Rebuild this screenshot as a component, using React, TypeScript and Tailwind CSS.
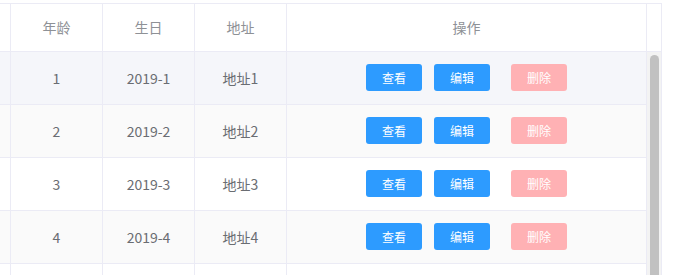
import React from "react";

const rows = [
  { age: "1", date: "2019-1", addr: "地址1", bg: "bg-[#f5f6fa]" },
  { age: "2", date: "2019-2", addr: "地址2", bg: "bg-[#fafafa]" },
  { age: "3", date: "2019-3", addr: "地址3", bg: "bg-white" },
  { age: "4", date: "2019-4", addr: "地址4", bg: "bg-[#fafafa]" },
];

const cell = "border-r border-[#ebebf5] flex items-center justify-center";

function Btn({ label, color, extra }: { label: string; color: string; extra?: string }) {
  return (
    <div
      className={`w-[56px] h-[27px] rounded-[3px] flex items-center justify-center text-[12px] text-white ${color} ${extra ?? ""}`}
    >
      {label}
    </div>
  );
}

export default function App() {
  return (
    <div
      className="w-[699px] h-[275px] bg-white overflow-hidden pt-[3px]"
      style={{ fontFamily: '"Noto Sans CJK SC", "Noto Sans", sans-serif' }}
    >
      <div className="w-[662px] border-t border-[#ebebf5]">
        {/* header */}
        <div className="flex h-[48px] border-b border-[#ebebf5] text-[14px] text-[#8e9196]">
          <div className={`${cell} w-[11px]`} />
          <div className={`${cell} w-[92px]`}>年龄</div>
          <div className={`${cell} w-[92px]`}>生日</div>
          <div className={`${cell} w-[92px]`}>地址</div>
          <div className={`${cell} w-[360px]`}>操作</div>
          <div className={`${cell} w-[15px]`} />
        </div>
        {/* body */}
        <div className="flex">
          <div className="w-[647px]">
            {rows.map((r) => (
              <div key={r.age} className={`flex h-[53px] border-b border-[#ebebf5] text-[14px] text-[#6a6d72] ${r.bg}`}>
                <div className={`${cell} w-[11px]`} />
                <div className={`${cell} w-[92px]`}>{r.age}</div>
                <div className={`${cell} w-[92px]`}>{r.date}</div>
                <div className={`${cell} w-[92px]`}>{r.addr}</div>
                <div className={`${cell} w-[360px] pb-[1px]`}>
                  <Btn label="查看" color="bg-[#2d9bff]" />
                  <Btn label="编辑" color="bg-[#2d9bff]" extra="ml-[12px]" />
                  <Btn label="删除" color="bg-[#ffb1b4]" extra="ml-[21px]" />
                </div>
              </div>
            ))}
            <div className="flex h-[53px] bg-white">
              <div className={`${cell} w-[11px]`} />
              <div className={`${cell} w-[92px]`} />
              <div className={`${cell} w-[92px]`} />
              <div className={`${cell} w-[92px]`} />
              <div className={`${cell} w-[360px]`} />
            </div>
          </div>
          <div className="w-[15px] h-[265px] bg-[#f3f3f3] border-r border-[#ebebf5] pl-[3px] pt-[3px]">
            <div className="w-[9px] h-[260px] bg-[#c1c1c1] rounded-t-[5px]" />
          </div>
        </div>
      </div>
    </div>
  );
}
